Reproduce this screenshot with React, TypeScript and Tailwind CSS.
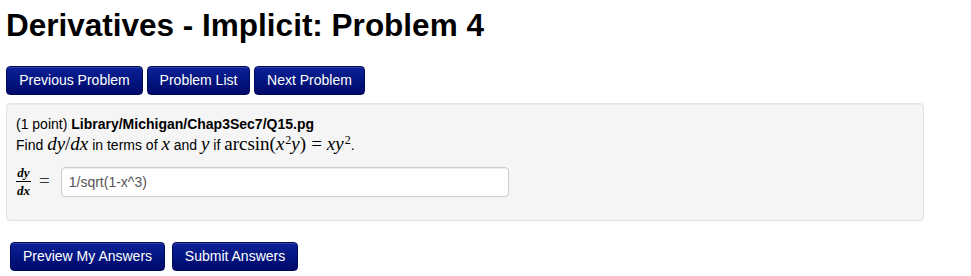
import React from "react";

const sans = "font-['Liberation_Sans',Arial,sans-serif]";
const math = "font-['Liberation_Serif','Times_New_Roman',serif] text-[19px]";

function NavButton({ children, width }: { children: React.ReactNode; width: string }) {
  return (
    <button
      type="button"
      className={`${width} h-[29px] rounded-[4px] border border-[#000a5c] bg-gradient-to-b from-[#0b2197] to-[#00096a] text-center text-[14px] leading-[27px] text-white shadow-[inset_0_1px_0_rgba(255,255,255,0.15)]`}
    >
      {children}
    </button>
  );
}

function M({ children }: { children: React.ReactNode }) {
  return <span className={`${math} italic`}>{children}</span>;
}

function Sup({ children }: { children: React.ReactNode }) {
  return <span className="relative -top-[6px] ml-[1px] text-[12px] leading-none">{children}</span>;
}

export default function App() {
  return (
    <div className={`${sans} min-h-[276px] bg-white px-[6px] text-[14px] text-black`}>
      {/* Title */}
      <h1 className="pt-[8px] text-[31.5px] font-bold leading-[35px]">
        Derivatives - Implicit: Problem 4
      </h1>

      {/* Problem navigation */}
      <div className="mt-[23px] flex gap-[4px]">
        <NavButton width="w-[137px]">Previous Problem</NavButton>
        <NavButton width="w-[103px]">Problem List</NavButton>
        <NavButton width="w-[111px]">Next Problem</NavButton>
      </div>

      {/* Problem body */}
      <div className="mt-[8px] w-[918px] rounded-[4px] border border-[#e3e3e3] bg-[#f5f5f5] px-[9px] pb-[23px] pt-[10px] shadow-[inset_0_1px_1px_rgba(0,0,0,0.05)]">
        <div className="leading-[20px]">
          (1 point) <b>Library/Michigan/Chap3Sec7/Q15.pg</b>
        </div>
        <div className="h-[20px] leading-[20px]">
          Find <M>dy</M>
          <span className={math}>/</span>
          <M>dx</M> in terms of <M>x</M> and <M>y</M> if{" "}
          <span className={`${math} leading-[20px]`}>
            arcsin(<i>x</i>
            <Sup>2</Sup>
            <i>y</i>)<span className="px-[5px]">=</span>
            <i>xy</i>
            <Sup>2</Sup>
          </span>
          .
        </div>

        {/* Answer row */}
        <div className="mt-[12px] flex items-center">
          <span className="flex flex-col items-center font-['Liberation_Serif',serif] text-[13px] font-bold italic leading-[13px]">
            <span className="px-[1px]">dy</span>
            <span className="my-[2px] h-[1px] w-full bg-black" />
            <span className="px-[1px]">dx</span>
          </span>
          <span className={`${math} ml-[8px] text-[#333]`}>=</span>
          <input
            readOnly
            value="1/sqrt(1-x^3)"
            className={`${sans} ml-[11px] h-[30px] w-[448px] rounded-[4px] border border-[#cccccc] bg-white px-[7px] text-[14px] text-[#555555] shadow-[inset_0_1px_1px_rgba(0,0,0,0.075)] outline-none`}
          />
        </div>
      </div>

      {/* Submit actions */}
      <div className="ml-[4px] mt-[21px] flex gap-[7px]">
        <NavButton width="w-[155px]">Preview My Answers</NavButton>
        <NavButton width="w-[126px]">Submit Answers</NavButton>
      </div>
    </div>
  );
}
